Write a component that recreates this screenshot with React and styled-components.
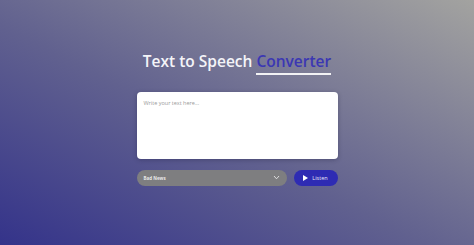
import React from "react";
import styled, { createGlobalStyle } from "styled-components";

const GlobalStyle = createGlobalStyle`
  html, body {
    margin: 0;
    padding: 0;
    height: 100%;
  }
  #root {
    height: 100%;
  }
`;

const Page = styled.div`
  height: 245px;
  width: 100%;
  display: flex;
  flex-direction: column;
  align-items: center;
  justify-content: center;
  background: linear-gradient(to top right, #34338a 0%, #61618f 45%, #a3a3a0 100%);
  font-family: "Open Sans", "Noto Sans", sans-serif;
  padding-bottom: 10px;
  box-sizing: border-box;
`;

const Title = styled.h1`
  margin: 0 0 17px;
  font-size: 15.5px;
  font-weight: 600;
  color: #f4f4f8;
  span {
    color: #3b37b3;
    display: inline-block;
    padding-bottom: 1px;
    border-bottom: 2px solid #f2f2f4;
  }
`;

const TextBox = styled.textarea`
  width: 201px;
  height: 67px;
  box-sizing: border-box;
  border: none;
  border-radius: 4px;
  background: #fff;
  padding: 7px 7px;
  font-family: inherit;
  font-size: 5.5px;
  resize: none;
  outline: none;
  box-shadow: 0 1px 4px rgba(30, 30, 60, 0.35);
  &::placeholder {
    color: #9a9a9a;
  }
`;

const Row = styled.div`
  display: flex;
  gap: 7px;
  width: 201px;
  margin-top: 11px;
`;

const Select = styled.div`
  flex: 1;
  height: 16px;
  border-radius: 8px;
  background: #7e7e80;
  display: flex;
  align-items: center;
  justify-content: space-between;
  padding: 0 7px;
  color: #e8e8e8;
  font-size: 4.5px;
  font-weight: 700;
`;

const Button = styled.button`
  width: 44px;
  height: 16px;
  border: none;
  border-radius: 8px;
  background: #2e2bb3;
  color: #e8e8f4;
  font-family: inherit;
  font-size: 5.5px;
  display: flex;
  align-items: center;
  justify-content: center;
  gap: 4px;
  padding: 0;
`;

export default function App() {
  return (
    <>
      <GlobalStyle />
      <Page>
        <Title>
          Text to Speech <span>Converter</span>
        </Title>
        <TextBox placeholder="Write your text here..." />
        <Row>
          <Select>
            <span>Bad News</span>
            <svg width="7" height="5" viewBox="0 0 7 5">
              <path d="M1 1 L3.5 3.8 L6 1" fill="none" stroke="#e6e6e6" strokeWidth="0.9" />
            </svg>
          </Select>
          <Button>
            <svg width="5" height="6" viewBox="0 0 5 6">
              <path d="M0 0 L5 3 L0 6 Z" fill="#fff" />
            </svg>
            Listen
          </Button>
        </Row>
      </Page>
    </>
  );
}
